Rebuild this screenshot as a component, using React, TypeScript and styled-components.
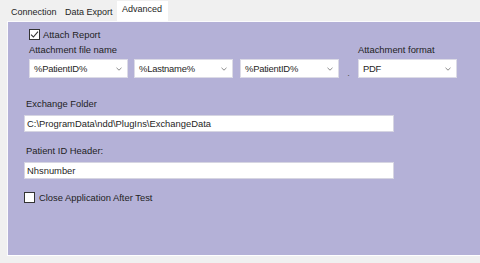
import React from 'react'
import styled, { createGlobalStyle } from 'styled-components'

const GlobalStyle = createGlobalStyle`
    html, body {
        margin: 0;
        padding: 0;
        background: #f0f0f0;
    }
    body {
        font-family: "Liberation Sans", Arial, sans-serif;
        font-size: 9.4px;
        color: #1e1e1e;
    }
`

const Window = styled.div`
    width: 480px;
    height: 263px;
    overflow: hidden;
    background: #f0f0f0;
`

const TabStrip = styled.div`
    display: flex;
    align-items: flex-end;
    height: 21px;
    padding-left: 8px;
`

const Tab = styled.div<{ selected?: boolean; w: number }>`
    display: flex;
    align-items: ${props => props.selected ? 'flex-start' : 'center'};
    box-sizing: border-box;
    width: ${props => props.w}px;
    height: ${props => props.selected ? 20 : 18}px;
    padding: ${props => props.selected ? '3px 0 0 5px' : '0 0 0 3px'};
    background: ${props => props.selected ? '#ffffff' : 'transparent'};
    font-size: 9px;
    white-space: nowrap;
`

const Panel = styled.div`
    margin-left: 7px;
    height: 235px;
    box-sizing: border-box;
    background: #b4b1d7;
    border-top: 1px solid #fbfbfd;
    border-left: 1px solid #fbfbfd;
    border-bottom: 1px solid #ffffff;
    display: flex;
    flex-direction: column;
`

const AttachGroup = styled.div`
    display: flex;
    flex-direction: column;
    padding-left: 21px;
    padding-top: 6px;
`

const CheckRow = styled.label<{ textGap: number }>`
    display: flex;
    align-items: center;
    gap: ${props => props.textGap}px;
    height: 13px;
    line-height: 13px;
`

const Box = styled.span`
    display: inline-flex;
    align-items: center;
    justify-content: center;
    width: 11px;
    height: 11px;
    box-sizing: border-box;
    border: 1px solid #333333;
    background: #ffffff;
`

const FieldRow = styled.div`
    display: flex;
    align-items: flex-end;
    margin-top: 3px;
`

const Field = styled.div<{ gapAfter?: number }>`
    display: flex;
    flex-direction: column;
    margin-right: ${props => props.gapAfter ?? 0}px;
`

const Label = styled.div`
    height: 15px;
    line-height: 12px;
    white-space: nowrap;
`

const Combo = styled.div`
    display: flex;
    align-items: center;
    justify-content: space-between;
    box-sizing: border-box;
    width: 99px;
    height: 19px;
    padding: 0 5px 0 4px;
    background: #ffffff;
    border: 1px solid #dcdbe6;
    letter-spacing: -0.2px;
`

const Separator = styled.div`
    width: 19px;
    height: 19px;
    display: flex;
    align-items: flex-end;
    justify-content: center;
    color: #555;
    line-height: 10px;
`

const FolderGroup = styled.div`
    display: flex;
    flex-direction: column;
    padding-left: 16px;
    padding-top: 20px;
`

const FieldLabel = styled.div`
    height: 12px;
    line-height: 12px;
    padding-left: 2px;
    margin-bottom: 5px;
`

const TextBox = styled.div<{ gapAfter: number }>`
    box-sizing: border-box;
    width: 370px;
    height: 17px;
    line-height: 15px;
    padding-left: 2px;
    background: #ffffff;
    border: 1px solid #d6d5e2;
    margin-bottom: ${props => props.gapAfter}px;
`

const Chevron = () => (
    <svg width="6" height="4" viewBox="0 0 6 4">
        <path d="M0.5 0.8 L3 3.2 L5.5 0.8" fill="none" stroke="#8a8a8a" strokeWidth="1" />
    </svg>
)

const Check = () => (
    <svg width="9" height="9" viewBox="0 0 9 9">
        <path d="M1 4.6 L3.4 7 L8 1.6" fill="none" stroke="#333" strokeWidth="1.1" />
    </svg>
)

const fileNameParts = ['%PatientID%', '%Lastname%', '%PatientID%']

export default () => (
    <Window>
        <GlobalStyle />
        <TabStrip>
            <Tab w={54}>Connection</Tab>
            <Tab w={55}>Data Export</Tab>
            <Tab w={51} selected>Advanced</Tab>
        </TabStrip>
        <Panel>
            <AttachGroup>
                <CheckRow textGap={3}>
                    <Box><Check /></Box>
                    Attach Report
                </CheckRow>
                <FieldRow>
                    {fileNameParts.map((part, i) => (
                        <Field key={i} gapAfter={i === 0 ? 6 : i === 1 ? 7 : 0}>
                            <Label>{i === 0 ? 'Attachment file name' : ''}</Label>
                            <Combo>{part}<Chevron /></Combo>
                        </Field>
                    ))}
                    <Separator>.</Separator>
                    <Field>
                        <Label>Attachment format</Label>
                        <Combo>PDF<Chevron /></Combo>
                    </Field>
                </FieldRow>
            </AttachGroup>
            <FolderGroup>
                <FieldLabel>Exchange Folder</FieldLabel>
                <TextBox gapAfter={13}>C:\ProgramData\ndd\PlugIns\ExchangeData</TextBox>
                <FieldLabel>Patient ID Header:</FieldLabel>
                <TextBox gapAfter={12}>Nhsnumber</TextBox>
                <CheckRow textGap={4}>
                    <Box />
                    Close Application After Test
                </CheckRow>
            </FolderGroup>
        </Panel>
    </Window>
)
